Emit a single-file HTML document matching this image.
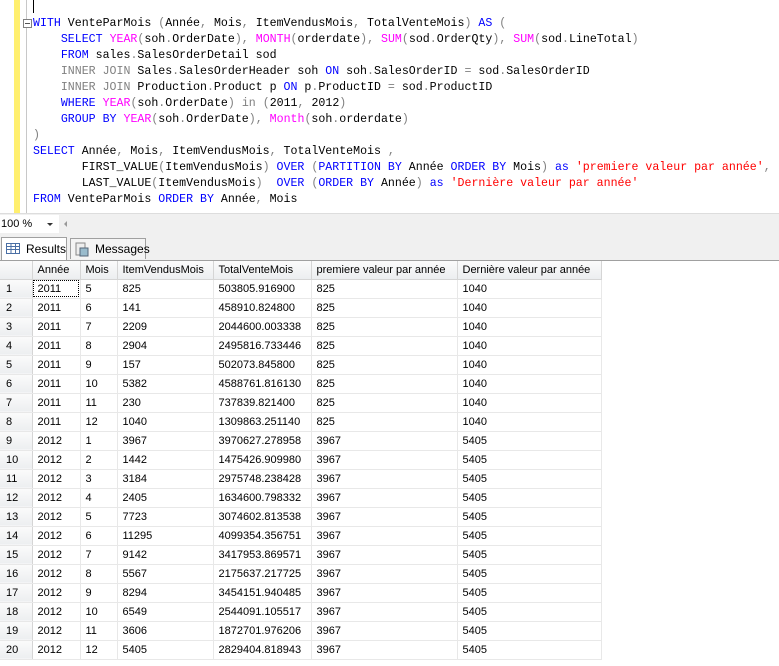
<!DOCTYPE html>
<html><head><meta charset="utf-8"><style>
body{margin:0;width:779px;height:666px;background:#fff;position:relative;overflow:hidden;font-family:"Liberation Sans",sans-serif}
.ed{position:absolute;left:0;top:0;width:779px;height:213px;background:#fff}
.ybar{position:absolute;left:14px;top:0;width:6px;height:213px;background:#ffef6e}
.gl{position:absolute;left:26px;top:0;width:1px;height:213px;background:#c8c8c8}
.code{position:absolute;left:33px;top:16px;font-family:"Liberation Mono",monospace;font-size:11.6px;line-height:16px;white-space:pre;color:#000}
.k{color:#0000ff}.f{color:#ff00ff}.g{color:#808080}.s{color:#ff0000}
.zoom{position:absolute;left:0;top:213px;width:779px;height:21px;background:#f0f0f0;border-top:1px solid #ddd;font-size:11px}
.tabs{position:absolute;left:0;top:234px;width:779px;height:26px;background:#f0f0f0;border-bottom:1px solid #a0a0a0}
.tab{position:absolute;font-size:12px;top:4px;height:21px;line-height:20px;box-sizing:border-box}
table{position:absolute;left:0;top:261px;border-collapse:collapse;font-size:11px;table-layout:fixed}
td{height:19px;padding:1px 0 0 5px;border-right:1px solid #e8e8e8;border-bottom:1px solid #e8e8e8;box-sizing:border-box;white-space:nowrap;overflow:hidden}
tr.h td{height:18px;background:linear-gradient(#fbfbfb,#eceef0);border-right:1px solid #d5d5d5;border-bottom:1px solid #d5d5d5}
td.n{background:linear-gradient(#fbfbfb,#eceef0);border-right:1px solid #d5d5d5;padding-left:6px}
</style></head><body>
<div class="ed"><div class="ybar"></div><div class="gl"></div>
<div style="position:absolute;left:33px;top:0;width:1px;height:13px;background:#000"></div>
<div style="position:absolute;left:23px;top:19px;width:7px;height:7px;border:1px solid #808080;background:#fff"><div style="position:absolute;left:1px;top:3px;width:5px;height:1px;background:#555"></div></div>
<div class="code"><span class="k">WITH</span> VenteParMois <span class="g">(</span>Année<span class="g">,</span> Mois<span class="g">,</span> ItemVendusMois<span class="g">,</span> TotalVenteMois<span class="g">)</span> <span class="k">AS</span> <span class="g">(</span>
    <span class="k">SELECT</span> <span class="f">YEAR</span><span class="g">(</span>soh<span class="g">.</span>OrderDate<span class="g">),</span> <span class="f">MONTH</span><span class="g">(</span>orderdate<span class="g">),</span> <span class="f">SUM</span><span class="g">(</span>sod<span class="g">.</span>OrderQty<span class="g">),</span> <span class="f">SUM</span><span class="g">(</span>sod<span class="g">.</span>LineTotal<span class="g">)</span>
    <span class="k">FROM</span> sales<span class="g">.</span>SalesOrderDetail sod
    <span class="g">INNER JOIN</span> Sales<span class="g">.</span>SalesOrderHeader soh <span class="k">ON</span> soh<span class="g">.</span>SalesOrderID <span class="g">=</span> sod<span class="g">.</span>SalesOrderID
    <span class="g">INNER JOIN</span> Production<span class="g">.</span>Product p <span class="k">ON</span> p<span class="g">.</span>ProductID <span class="g">=</span> sod<span class="g">.</span>ProductID
    <span class="k">WHERE</span> <span class="f">YEAR</span><span class="g">(</span>soh<span class="g">.</span>OrderDate<span class="g">)</span> <span class="g">in</span> <span class="g">(</span>2011<span class="g">,</span> 2012<span class="g">)</span>
    <span class="k">GROUP BY</span> <span class="f">YEAR</span><span class="g">(</span>soh<span class="g">.</span>OrderDate<span class="g">),</span> <span class="f">Month</span><span class="g">(</span>soh<span class="g">.</span>orderdate<span class="g">)</span>
<span class="g">)</span>
<span class="k">SELECT</span> Année<span class="g">,</span> Mois<span class="g">,</span> ItemVendusMois<span class="g">,</span> TotalVenteMois <span class="g">,</span>
       FIRST_VALUE<span class="g">(</span>ItemVendusMois<span class="g">)</span> <span class="k">OVER</span> <span class="g">(</span><span class="k">PARTITION BY</span> Année <span class="k">ORDER BY</span> Mois<span class="g">)</span> <span class="k">as</span> <span class="s">'premiere valeur par année'</span><span class="g">,</span>
       LAST_VALUE<span class="g">(</span>ItemVendusMois<span class="g">)</span>  <span class="k">OVER</span> <span class="g">(</span><span class="k">ORDER BY</span> Année<span class="g">)</span> <span class="k">as</span> <span class="s">'Dernière valeur par année'</span>
<span class="k">FROM</span> VenteParMois <span class="k">ORDER BY</span> Année<span class="g">,</span> Mois</div></div>
<div class="zoom"><div style="position:absolute;left:0;top:1px;width:58px;height:18px;background:#fff;line-height:18px;padding-left:1px">100 %</div><div style="position:absolute;left:47px;top:9px;border:3px solid transparent;border-top:3px solid #333"></div><div style="position:absolute;left:61px;top:7px;border:3px solid transparent;border-right:3px solid #999"></div></div>
<div class="tabs">
<div class="tab" style="left:1px;width:66px;background:#fff;border:1px solid #a0a0a0;border-bottom:none;height:23px;top:3px"><svg style="position:absolute;left:4px;top:5px" width="14" height="11"><rect x=".5" y=".5" width="13" height="10" fill="#fff" stroke="#4a6fa5"/><path d="M.5 3.5h13M.5 6.5h13M5 .5v10M9.5 .5v10" stroke="#4a6fa5"/></svg><span style="position:absolute;left:24px;top:1px">Results</span></div>
<div class="tab" style="left:70px;width:76px;border:1px solid #a0a0a0;border-bottom:none;background:#f4f4f4"><svg style="position:absolute;left:4px;top:3px" width="14" height="15"><rect x="1" y="1" width="9" height="12" fill="#eee" stroke="#888"/><rect x="5" y="6" width="8" height="8" fill="#9bc" stroke="#567"/></svg><span style="position:absolute;left:24px;top:0">Messages</span></div>
</div>
<table>
<colgroup><col style="width:32px"><col style="width:48px"><col style="width:37px"><col style="width:96px"><col style="width:98px"><col style="width:146px"><col style="width:144px"></colgroup>
<tr class="h"><td></td><td>Année</td><td>Mois</td><td>ItemVendusMois</td><td>TotalVenteMois</td><td>premiere valeur par année</td><td>Dernière valeur par année</td></tr>
<tr><td class="n">1</td><td style="outline:1px dotted #000;outline-offset:-2px">2011</td><td>5</td><td>825</td><td>503805.916900</td><td>825</td><td>1040</td></tr>
<tr><td class="n">2</td><td>2011</td><td>6</td><td>141</td><td>458910.824800</td><td>825</td><td>1040</td></tr>
<tr><td class="n">3</td><td>2011</td><td>7</td><td>2209</td><td>2044600.003338</td><td>825</td><td>1040</td></tr>
<tr><td class="n">4</td><td>2011</td><td>8</td><td>2904</td><td>2495816.733446</td><td>825</td><td>1040</td></tr>
<tr><td class="n">5</td><td>2011</td><td>9</td><td>157</td><td>502073.845800</td><td>825</td><td>1040</td></tr>
<tr><td class="n">6</td><td>2011</td><td>10</td><td>5382</td><td>4588761.816130</td><td>825</td><td>1040</td></tr>
<tr><td class="n">7</td><td>2011</td><td>11</td><td>230</td><td>737839.821400</td><td>825</td><td>1040</td></tr>
<tr><td class="n">8</td><td>2011</td><td>12</td><td>1040</td><td>1309863.251140</td><td>825</td><td>1040</td></tr>
<tr><td class="n">9</td><td>2012</td><td>1</td><td>3967</td><td>3970627.278958</td><td>3967</td><td>5405</td></tr>
<tr><td class="n">10</td><td>2012</td><td>2</td><td>1442</td><td>1475426.909980</td><td>3967</td><td>5405</td></tr>
<tr><td class="n">11</td><td>2012</td><td>3</td><td>3184</td><td>2975748.238428</td><td>3967</td><td>5405</td></tr>
<tr><td class="n">12</td><td>2012</td><td>4</td><td>2405</td><td>1634600.798332</td><td>3967</td><td>5405</td></tr>
<tr><td class="n">13</td><td>2012</td><td>5</td><td>7723</td><td>3074602.813538</td><td>3967</td><td>5405</td></tr>
<tr><td class="n">14</td><td>2012</td><td>6</td><td>11295</td><td>4099354.356751</td><td>3967</td><td>5405</td></tr>
<tr><td class="n">15</td><td>2012</td><td>7</td><td>9142</td><td>3417953.869571</td><td>3967</td><td>5405</td></tr>
<tr><td class="n">16</td><td>2012</td><td>8</td><td>5567</td><td>2175637.217725</td><td>3967</td><td>5405</td></tr>
<tr><td class="n">17</td><td>2012</td><td>9</td><td>8294</td><td>3454151.940485</td><td>3967</td><td>5405</td></tr>
<tr><td class="n">18</td><td>2012</td><td>10</td><td>6549</td><td>2544091.105517</td><td>3967</td><td>5405</td></tr>
<tr><td class="n">19</td><td>2012</td><td>11</td><td>3606</td><td>1872701.976206</td><td>3967</td><td>5405</td></tr>
<tr><td class="n">20</td><td>2012</td><td>12</td><td>5405</td><td>2829404.818943</td><td>3967</td><td>5405</td></tr>
</table>
</body></html>
